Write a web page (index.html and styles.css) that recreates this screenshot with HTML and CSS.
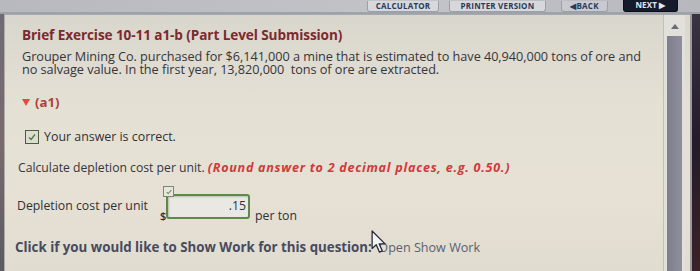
FILE: index.html
```html
<!DOCTYPE html>
<html>
<head>
<meta charset="utf-8">
<link rel="stylesheet" href="styles.css">
</head>
<body>
<div class="screen">
  <div class="topbar">
    <span class="tbtn calc">CALCULATOR</span>
    <span class="tbtn print">PRINTER VERSION</span>
    <span class="tbtn back">&#9664;BACK</span>
    <span class="tbtn next">NEXT &#9654;</span>
  </div>
  <div class="frame">
    <div class="edge"></div>
    <div class="panel">
      <div class="content">
        <h1 class="title">Brief Exercise 10-11 a1-b (Part Level Submission)</h1>
        <p class="problem">Grouper Mining Co. purchased for $6,141,000 a mine that is estimated to have 40,940,000 tons of ore and no salvage value. In the first year, 13,820,000&nbsp; tons of ore are extracted.</p>
        <div class="part"><span class="tri"></span>(a1)</div>
        <div class="correct"><span class="check"><svg viewBox="0 0 12 12" width="10" height="10"><path d="M2.5 6.5 L5 9 L9.5 3" fill="none" stroke="#4f7a3a" stroke-width="1.6"/></svg></span>Your answer is correct.</div>
        <p class="ask">Calculate depletion cost per unit. <em class="hint">(Round answer to 2 decimal places, e.g. 0.50.)</em></p>
        <div class="answer">
          <span class="label">Depletion cost per unit</span>
          <span class="dollar">$</span>
          <span class="field"><span class="mini"><svg viewBox="0 0 10 10" width="8" height="8"><path d="M2 5 L4 7 L8 2.5" fill="none" stroke="#5d8a45" stroke-width="1.3"/></svg></span><span class="val">.15</span></span>
          <span class="unit">per ton</span>
        </div>
        <div class="showwork"><b>Click if you would like to Show Work for this question:</b> <span class="link"><span class="cursor"><svg viewBox="0 0 20 26" width="19" height="24"><path d="M2 1 L2 20 L6.5 16 L10 24 L13 22.6 L9.6 15 L16 15 Z" fill="#f4f4f6" stroke="#2a2a3a" stroke-width="1.4" stroke-linejoin="round"/></svg></span>Open Show Work</span></div>
      </div>
      <div class="scroll"><div class="arrow"></div><div class="thumb"></div></div>
    </div>
    <div class="dark"></div>
  </div>
</div>
</body>
</html>
```
FILE: styles.css
```css
html, body { margin: 0; padding: 0; }
body {
  width: 700px;
  height: 271px;
  overflow: hidden;
  background: #e6e2d6;
  font-family: "Open Sans", "Liberation Sans", sans-serif;
}
.screen { width: 700px; height: 271px; display: flex; flex-direction: column; }
.topbar {
  height: 12px;
  flex: none;
  background: linear-gradient(90deg, #b7b9bf, #c3c4c8 60%, #b6b8be);
  border-bottom: 2px solid #9ea2aa;
  display: flex;
  justify-content: flex-end;
  align-items: flex-end;
  padding-right: 22px;
}
.tbtn {
  font-size: 8px;
  font-weight: 700;
  line-height: 10px;
  height: 10px;
  padding: 0 6px;
  color: #2a3a5a;
  background: #d7d8dc;
  border: 1px solid #9aa0aa;
  border-top: none;
  border-radius: 0 0 3px 3px;
  letter-spacing: 0.2px;
}
.tbtn.calc { width: 58px; text-align: center; }
.tbtn.print { width: 83px; text-align: center; margin-left: 10px; }
.tbtn.back { background: #c8cad0; margin-left: 15px; width: 33px; text-align: center; }
.tbtn.next { background: #151b2a; color: #e8e8ee; border-color: #0c0f18; height: 12px; line-height: 11px; margin-left: 15px; width: 41px; text-align: center; }
.frame { flex: 1; display: flex; min-height: 0; }
.edge { width: 4px; flex: none; background: linear-gradient(180deg, #6f6b76, #7a6a6e 50%, #5a5a64); border-right: 1px solid #b0aaa4; }
.panel {
  flex: 1;
  display: flex;
  background: linear-gradient(180deg, #d9d6cd 0%, #e4e0d4 35%, #e6e1d4 70%, #e0dccf 100%);
  border-top: 1px solid #a8a9ab;
  min-width: 0;
}
.content { flex: 1; padding: 12px 0 0 12px; color: #303036; min-width: 0; }
.title {
  margin: 0 0 0 5px;
  font-size: 13.6px;
  font-weight: 700;
  color: #7d2a2e;
  line-height: 16px;
  letter-spacing: -0.1px;
}
.problem {
  margin: 7px 0 0 5px;
  font-size: 12.7px;
  line-height: 13px;
  color: #35353b;
  width: 625px;
  letter-spacing: -0.05px;
}
.part {
  margin: 18px 0 0 5px;
  font-size: 13.2px;
  font-weight: 700;
  color: #b03f3f;
  display: flex;
  align-items: center;
  line-height: 16px;
}
.tri {
  width: 0; height: 0;
  border-left: 4.5px solid transparent;
  border-right: 4.5px solid transparent;
  border-top: 7px solid #e24a3c;
  margin-right: 5px;
}
.correct {
  margin: 20px 0 0 8px;
  display: flex;
  align-items: center;
  font-size: 12.4px;
  color: #303036;
  line-height: 14px;
}
.check {
  width: 12px; height: 12px;
  border: 1px solid #4e5a44;
  background: #dcdcd0;
  display: flex; align-items: center; justify-content: center;
  margin-right: 5px;
}
.ask {
  margin: 17px 0 0 1px;
  font-size: 12.2px;
  line-height: 14px;
  color: #35353b;
}
.hint { font-weight: 700; color: #d03a3a; font-size: 12.6px; letter-spacing: 0.72px; }
.answer { position: relative; height: 34px; margin-top: 9px; font-size: 12.3px; color: #303036; }
.label { position: absolute; left: 0; top: 15px; line-height: 14px; }
.dollar { position: absolute; left: 143px; top: 26px; font-size: 11px; font-weight: 600; line-height: 12px; }
.field {
  position: absolute; left: 149px; top: 10px;
  width: 80px; height: 21px;
  border: 2px solid #5e8a48;
  border-radius: 3px;
  background: #e9e8e2;
  box-shadow: inset 1px 1px 2px rgba(0,0,0,0.2);
}
.mini {
  position: absolute; left: -5px; top: -10px;
  width: 9px; height: 9px;
  border: 1px solid #7a8a70;
  background: #e8e7df;
  display: flex; align-items: center; justify-content: center;
}
.val { position: absolute; right: 2px; top: 1px; font-size: 12.3px; color: #303036; }
.unit { position: absolute; left: 238px; top: 25px; line-height: 14px; }
.showwork { margin-top: 21px; font-size: 13.3px; color: #474a60; line-height: 16px; white-space: nowrap; margin-left: -2px; }
.link { color: #5a6072; position: relative; padding-left: 3px; font-size: 12.6px; }
.cursor { position: absolute; left: -5px; top: -9px; }
.scroll {
  width: 21px; flex: none;
  border-left: 1px solid #c2c0bc;
  display: flex; flex-direction: column; align-items: center;
  background: #e2e0da;
  margin-right: 5px;
}
.arrow { margin-top: 9px; width: 0; height: 0; border-left: 4px solid transparent; border-right: 4px solid transparent; border-bottom: 5px solid #6c6c70; }
.thumb { margin-top: 7px; width: 15px; flex: 1; background: linear-gradient(90deg, #7e7e8e, #8e8e9c); }
.dark { width: 8px; flex: none; background: linear-gradient(180deg, #3a3440, #241c28 50%, #3a2228); border-left: 2px solid #9a98a0; }
```
